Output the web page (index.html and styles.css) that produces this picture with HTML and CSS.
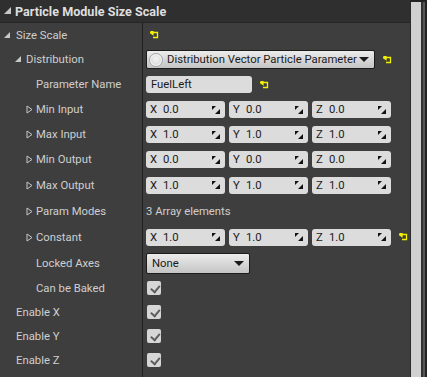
FILE: index.html
```html
<!DOCTYPE html>
<html lang="en">
<head>
    <meta charset="UTF-8">
    <title>Particle Module Size Scale</title>
    <link rel="stylesheet" href="styles.css">
</head>
<body>
    <div class="panel">
        <div class="main">
            <div class="header">
                <svg class="arrow-down" width="8" height="8" viewBox="0 0 8 8"><polygon points="7,0 7,7 0,7" /></svg>
                <span>Particle Module Size Scale</span>
            </div>

            <div class="rows">
                <div class="row short">
                    <div class="name lvl0"><svg class="arrow-down" width="7" height="7" viewBox="0 0 7 7"><polygon points="6,0 6,6 0,6" /></svg>Size Scale</div>
                    <div class="value"><svg class="reset" width="9" height="8" viewBox="0 0 9 8"><path d="M2.5 1.5 H7.5 V6.5 H3" /><polygon points="0,1.5 3,-0.5 3,3.5" /></svg></div>
                </div>

                <div class="row">
                    <div class="name lvl1"><svg class="arrow-down" width="7" height="7" viewBox="0 0 7 7"><polygon points="6,0 6,6 0,6" /></svg>Distribution</div>
                    <div class="value">
                        <div class="combo wide">
                            <span class="radio"></span>
                            <span class="combo-text">Distribution Vector Particle Parameter</span>
                            <span class="caret"></span>
                        </div>
                        <svg class="reset" width="9" height="8" viewBox="0 0 9 8"><path d="M2.5 1.5 H7.5 V6.5 H3" /><polygon points="0,1.5 3,-0.5 3,3.5" /></svg>
                    </div>
                </div>

                <div class="row">
                    <div class="name lvl2">Parameter Name</div>
                    <div class="value">
                        <div class="textbox">FuelLeft</div>
                        <svg class="reset" width="9" height="8" viewBox="0 0 9 8"><path d="M2.5 1.5 H7.5 V6.5 H3" /><polygon points="0,1.5 3,-0.5 3,3.5" /></svg>
                    </div>
                </div>

                <div class="row">
                    <div class="name lvl2"><svg class="arrow-right" width="7" height="9" viewBox="0 0 7 9"><polygon points="1,1 6,4.5 1,8" /></svg>Min Input</div>
                    <div class="value vec">
                        <div class="num"><b>X</b>0.0<svg class="spin" width="8" height="8" viewBox="0 0 8 8"><polygon points="0,0 4,0 0,4" /><polygon points="8,3 8,8 3,8" /></svg></div>
                        <div class="num"><b>Y</b>0.0<svg class="spin" width="8" height="8" viewBox="0 0 8 8"><polygon points="0,0 4,0 0,4" /><polygon points="8,3 8,8 3,8" /></svg></div>
                        <div class="num"><b>Z</b>0.0<svg class="spin" width="8" height="8" viewBox="0 0 8 8"><polygon points="0,0 4,0 0,4" /><polygon points="8,3 8,8 3,8" /></svg></div>
                    </div>
                </div>

                <div class="row">
                    <div class="name lvl2"><svg class="arrow-right" width="7" height="9" viewBox="0 0 7 9"><polygon points="1,1 6,4.5 1,8" /></svg>Max Input</div>
                    <div class="value vec">
                        <div class="num"><b>X</b>1.0<svg class="spin" width="8" height="8" viewBox="0 0 8 8"><polygon points="0,0 4,0 0,4" /><polygon points="8,3 8,8 3,8" /></svg></div>
                        <div class="num"><b>Y</b>1.0<svg class="spin" width="8" height="8" viewBox="0 0 8 8"><polygon points="0,0 4,0 0,4" /><polygon points="8,3 8,8 3,8" /></svg></div>
                        <div class="num"><b>Z</b>1.0<svg class="spin" width="8" height="8" viewBox="0 0 8 8"><polygon points="0,0 4,0 0,4" /><polygon points="8,3 8,8 3,8" /></svg></div>
                    </div>
                </div>

                <div class="row">
                    <div class="name lvl2"><svg class="arrow-right" width="7" height="9" viewBox="0 0 7 9"><polygon points="1,1 6,4.5 1,8" /></svg>Min Output</div>
                    <div class="value vec">
                        <div class="num"><b>X</b>0.0<svg class="spin" width="8" height="8" viewBox="0 0 8 8"><polygon points="0,0 4,0 0,4" /><polygon points="8,3 8,8 3,8" /></svg></div>
                        <div class="num"><b>Y</b>0.0<svg class="spin" width="8" height="8" viewBox="0 0 8 8"><polygon points="0,0 4,0 0,4" /><polygon points="8,3 8,8 3,8" /></svg></div>
                        <div class="num"><b>Z</b>0.0<svg class="spin" width="8" height="8" viewBox="0 0 8 8"><polygon points="0,0 4,0 0,4" /><polygon points="8,3 8,8 3,8" /></svg></div>
                    </div>
                </div>

                <div class="row tall">
                    <div class="name lvl2"><svg class="arrow-right" width="7" height="9" viewBox="0 0 7 9"><polygon points="1,1 6,4.5 1,8" /></svg>Max Output</div>
                    <div class="value vec">
                        <div class="num"><b>X</b>1.0<svg class="spin" width="8" height="8" viewBox="0 0 8 8"><polygon points="0,0 4,0 0,4" /><polygon points="8,3 8,8 3,8" /></svg></div>
                        <div class="num"><b>Y</b>1.0<svg class="spin" width="8" height="8" viewBox="0 0 8 8"><polygon points="0,0 4,0 0,4" /><polygon points="8,3 8,8 3,8" /></svg></div>
                        <div class="num"><b>Z</b>1.0<svg class="spin" width="8" height="8" viewBox="0 0 8 8"><polygon points="0,0 4,0 0,4" /><polygon points="8,3 8,8 3,8" /></svg></div>
                    </div>
                </div>

                <div class="row tall">
                    <div class="name lvl2"><svg class="arrow-right" width="7" height="9" viewBox="0 0 7 9"><polygon points="1,1 6,4.5 1,8" /></svg>Param Modes</div>
                    <div class="value"><span class="plain">3 Array elements</span></div>
                </div>

                <div class="row tall">
                    <div class="name lvl2"><svg class="arrow-right" width="7" height="9" viewBox="0 0 7 9"><polygon points="1,1 6,4.5 1,8" /></svg>Constant</div>
                    <div class="value vec">
                        <div class="num"><b>X</b>1.0<svg class="spin" width="8" height="8" viewBox="0 0 8 8"><polygon points="0,0 4,0 0,4" /><polygon points="8,3 8,8 3,8" /></svg></div>
                        <div class="num"><b>Y</b>1.0<svg class="spin" width="8" height="8" viewBox="0 0 8 8"><polygon points="0,0 4,0 0,4" /><polygon points="8,3 8,8 3,8" /></svg></div>
                        <div class="num"><b>Z</b>1.0<svg class="spin" width="8" height="8" viewBox="0 0 8 8"><polygon points="0,0 4,0 0,4" /><polygon points="8,3 8,8 3,8" /></svg></div>
                        <svg class="reset" width="9" height="8" viewBox="0 0 9 8"><path d="M2.5 1.5 H7.5 V6.5 H3" /><polygon points="0,1.5 3,-0.5 3,3.5" /></svg>
                    </div>
                </div>

                <div class="row tall">
                    <div class="name lvl2">Locked Axes</div>
                    <div class="value">
                        <div class="combo small">
                            <span class="combo-text">None</span>
                            <span class="caret"></span>
                        </div>
                    </div>
                </div>

                <div class="row short">
                    <div class="name lvl2">Can be Baked</div>
                    <div class="value"><span class="check"></span></div>
                </div>

                <div class="row short">
                    <div class="name lvl0">Enable X</div>
                    <div class="value"><span class="check"></span></div>
                </div>

                <div class="row short">
                    <div class="name lvl0">Enable Y</div>
                    <div class="value"><span class="check"></span></div>
                </div>

                <div class="row short">
                    <div class="name lvl0">Enable Z</div>
                    <div class="value"><span class="check"></span></div>
                </div>

                <div class="row filler">
                    <div class="name"></div>
                    <div class="value"></div>
                </div>
            </div>
        </div>

        <div class="scrollbar">
            <div class="thumb"></div>
            <div class="track"></div>
        </div>
    </div>
</body>
</html>
```

FILE: styles.css
```css
* {
    margin: 0;
    padding: 0;
    box-sizing: border-box;
}

body {
    font-family: Roboto, 'Noto Sans', sans-serif;
    font-size: 11.3px;
    background: #3e3e3e;
    color: #cfcfcf;
    width: 427px;
    height: 377px;
    overflow: hidden;
}

.panel {
    display: flex;
    height: 377px;
}

.main {
    width: 410px;
    display: flex;
    flex-direction: column;
    background: #3e3e3e;
}

.header {
    height: 23px;
    background: #2f2f2f;
    border-bottom: 1px solid #262626;
    display: flex;
    align-items: center;
    padding-left: 4px;
    gap: 3px;
    font-weight: bold;
    font-size: 12.6px;
    color: #dedede;
}

.header .arrow-down {
    fill: #c8c8c8;
}

.rows {
    flex: 1;
    display: flex;
    flex-direction: column;
}

.row {
    height: 25px;
    display: flex;
}

.row.tall {
    height: 26px;
}

.row.short {
    height: 24px;
}

.row.filler {
    flex: 1;
}

.name {
    width: 143px;
    border-right: 1px solid #1e1e1e;
    display: flex;
    align-items: center;
    white-space: nowrap;
}

.name svg {
    margin-right: 4px;
}

.lvl0 {
    padding-left: 16px;
}

.lvl1 {
    padding-left: 26px;
}

.lvl2 {
    padding-left: 36px;
}

.lvl0 .arrow-down {
    margin-left: -12px;
    margin-right: 5px;
}

.lvl1 .arrow-down {
    margin-left: -11px;
    margin-right: 4px;
}

.arrow-down {
    fill: #c8c8c8;
    flex-shrink: 0;
}

.arrow-right {
    fill: none;
    stroke: #c8c8c8;
    stroke-width: 1;
    margin-left: -10px;
    margin-right: 3px !important;
    flex-shrink: 0;
}

.value {
    flex: 1;
    display: flex;
    align-items: center;
    padding-left: 3px;
    gap: 4px;
}

.reset {
    fill: #f2f200;
    stroke: #f2f200;
    stroke-width: 1.3;
    margin-left: 4px;
    flex-shrink: 0;
}

.reset path {
    fill: none;
}

.combo {
    height: 19px;
    border: 1px solid #1c1c1c;
    border-radius: 2px;
    background: linear-gradient(#ececec, #c4c4c4);
    display: flex;
    align-items: center;
    color: #1a1a1a;
    padding: 0 5px 0 2px;
}

.combo.wide {
    width: 229px;
}

.combo.small {
    width: 104px;
    height: 21px;
    padding-left: 5px;
}

.combo-text {
    flex: 1;
    white-space: nowrap;
    overflow: hidden;
}

.radio {
    flex-shrink: 0;
    width: 14px;
    height: 14px;
    border-radius: 50%;
    border: 1px solid #a8a8a8;
    background: radial-gradient(circle at 50% 40%, #f4f4f4, #cfcfcf);
    box-shadow: inset 0 0 0 1px #f8f8f8;
    margin-right: 4px;
}

.caret {
    flex-shrink: 0;
    width: 0;
    height: 0;
    border-left: 5px solid transparent;
    border-right: 5px solid transparent;
    border-top: 5px solid #1a1a1a;
}

.textbox {
    width: 106px;
    height: 17px;
    border-radius: 3px;
    background: #dcdcdc;
    color: #1a1a1a;
    padding-left: 5px;
    display: flex;
    align-items: center;
}

.vec {
    gap: 4px;
}

.num {
    width: 79px;
    height: 17px;
    border-radius: 3px;
    background: #dcdcdc;
    color: #1a1a1a;
    display: flex;
    align-items: center;
    padding: 0 5px 0 4px;
}

.num b {
    font-weight: normal;
    width: 13px;
}

.spin {
    margin-left: auto;
    fill: #111;
}

.plain {
    color: #cfcfcf;
}

.check {
    width: 14px;
    height: 14px;
    border-radius: 2px;
    background: #d6d6d6;
    position: relative;
    margin-left: 1px;
}

.check::after {
    content: "";
    position: absolute;
    left: 3px;
    top: 2px;
    width: 7px;
    height: 4px;
    border-left: 2px solid #5c5c5c;
    border-bottom: 2px solid #5c5c5c;
    transform: rotate(-50deg) translate(-1px, 2px);
}

.scrollbar {
    width: 17px;
    display: flex;
    background: #222;
    padding-top: 2px;
}

.thumb {
    width: 11px;
    background: #d0d0d0;
    border-left: 1px solid #2a2a2a;
}

.track {
    width: 6px;
    border-left: 1px solid #333;
    background: linear-gradient(90deg, #333 0 1px, #575757 1px 3px, #232323 3px);
}
```
